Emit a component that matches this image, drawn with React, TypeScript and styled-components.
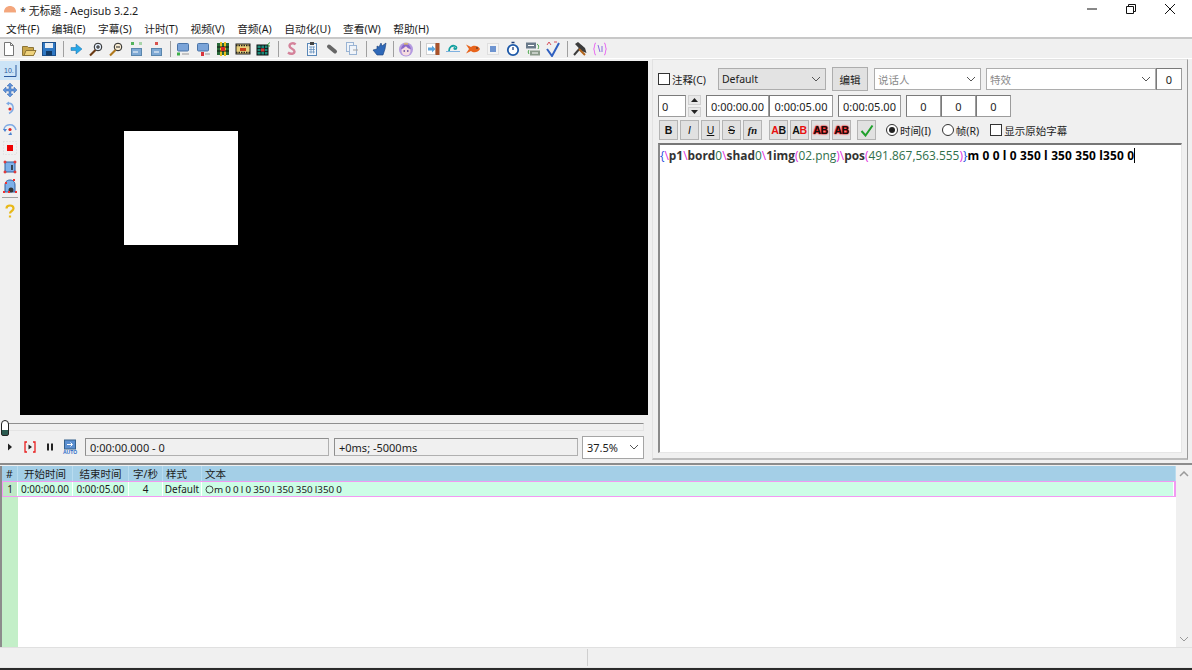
import React from 'react';
import styled, { createGlobalStyle } from 'styled-components';

const GlobalStyle = createGlobalStyle`
  html, body {
    margin: 0;
    padding: 0;
    background: #f0f0f0;
    overflow: hidden;
  }
  body {
    font-family: "Noto Sans", "Noto Sans CJK SC", sans-serif;
    font-size: 11px;
    color: #1c1c1c;
  }
  * { box-sizing: border-box; }
`;

const Window = styled.div`
  width: 1192px;
  height: 670px;
  display: flex;
  flex-direction: column;
  background: #f0f0f0;
  overflow: hidden;
`;

const TitleBar = styled.div`
  height: 19px;
  flex: none;
  background: #fff;
  display: flex;
  align-items: center;
  padding: 0 3px;
  font-size: 10.8px;
`;

const TitleText = styled.span`
  margin-left: 3px;
  flex: 1;
`;

const WindowButtons = styled.div`
  display: flex;
  align-items: center;
`;

const WindowButton = styled.div`
  width: 39px;
  height: 19px;
  display: flex;
  align-items: center;
  justify-content: center;
  margin-top: -2px;
`;

const MenuBar = styled.div`
  height: 18px;
  flex: none;
  background: #fff;
  display: flex;
  align-items: center;
  padding-left: 6px;
  gap: 12.5px;
  font-size: 10.7px;
`;

const Toolbar = styled.div`
  height: 22px;
  flex: none;
  display: flex;
  align-items: center;
  border-top: 2px solid #c8c8c8;
  border-bottom: 1px solid #fff;
`;

const ToolIcon = styled.div`
  width: 20px;
  height: 18px;
  flex: none;
  display: flex;
  align-items: center;
  padding-left: 1px;
`;

const ToolSep = styled.div<{ $wide?: boolean }>`
  width: 1px;
  height: 16px;
  margin: 0 ${(p) => (p.$wide ? 4 : 3)}px;
  flex: none;
  background: #a0a0a0;
`;

const Main = styled.div`
  height: 406px;
  flex: none;
  display: flex;
  border-bottom: 2px solid #8c8c8c;
`;

const VideoColumn = styled.div`
  width: 650px;
  flex: none;
  display: flex;
  flex-direction: column;
`;

const VideoRow = styled.div`
  display: flex;
  height: 354px;
  margin-top: 2px;
`;

const SideBar = styled.div`
  width: 20px;
  flex: none;
  display: flex;
  flex-direction: column;
  align-items: center;
`;

const SideButton = styled.div<{ $active?: boolean }>`
  width: 20px;
  height: 19.3px;
  flex: none;
  display: flex;
  align-items: center;
  justify-content: center;
  background: ${(p) => (p.$active ? '#cce4f7' : 'transparent')};
`;

const SideRule = styled.div`
  width: 16px;
  height: 1px;
  margin: 1px 0 3px;
  background: #a0a0a0;
`;

const VideoCanvas = styled.div`
  width: 628px;
  height: 354px;
  position: relative;
  background: #000;
`;

const WhiteSquare = styled.div`
  position: absolute;
  left: 104px;
  top: 70px;
  width: 114px;
  height: 114px;
  background: #fff;
`;

const SliderRow = styled.div`
  height: 20px;
  position: relative;
  margin: 0 5px;
  display: flex;
  align-items: center;
`;

const SliderTrack = styled.div`
  width: 639px;
  height: 8px;
  margin-top: 3px;
  border-top: 1px solid #8f8f8f;
  border-bottom: 1px solid #e4e4e4;
  border-right: 1px solid #e4e4e4;
`;

const SliderThumb = styled.div`
  position: absolute;
  left: -4px;
  top: 5px;
  width: 8px;
  height: 16px;
  background: linear-gradient(#fff 0 62%, #2a5a50 62%);
  border: 1px solid #222;
  border-radius: 4px 4px 2px 2px;
`;

const ControlsRow = styled.div`
  height: 24px;
  display: flex;
  align-items: center;
`;

const PlayButton = styled.div`
  width: 20px;
  height: 20px;
  flex: none;
  display: flex;
  align-items: center;
  justify-content: center;
`;

const ReadOnlyField = styled.div<{ $gap?: number }>`
  width: 244px;
  height: 18px;
  flex: none;
  margin-left: ${(p) => p.$gap ?? 0}px;
  display: flex;
  align-items: center;
  padding-left: 4px;
  background: #f0f0f0;
  border: 1px solid #8e8e8e;
  border-bottom-color: #b0b0b0;
  border-right-color: #b0b0b0;
  font-size: 11px;
  white-space: nowrap;
`;

const ZoomSelect = styled.div`
  width: 62px;
  height: 23px;
  flex: none;
  margin-left: 4px;
  display: flex;
  align-items: center;
  justify-content: space-between;
  padding: 0 4px;
  background: #fff;
  border: 1px solid #a5a5a5;
  font-size: 11px;
`;

const EditorFrame = styled.div`
  flex: 1;
  margin: 0 4px 3px 2px;
  padding: 8px 0 5px 5px;
  display: flex;
  flex-direction: column;
  border-top: 1px solid #e2e2e2;
  border-right: 1px solid #9a9a9a;
  border-bottom: 2px solid #bcbcbc;
  border-left: 1px solid #e2e2e2;
`;

const FormRow = styled.div<{ $height: number; $gap?: number }>`
  height: ${(p) => p.$height}px;
  flex: none;
  display: flex;
  align-items: center;
  margin-top: ${(p) => p.$gap ?? 0}px;
`;

const CheckBox = styled.div<{ $gap?: number }>`
  width: 12px;
  height: 12px;
  flex: none;
  margin-left: ${(p) => p.$gap ?? 0}px;
  background: #fff;
  border: 1px solid #333;
`;

const Radio = styled.div<{ $gap?: number; $on?: boolean }>`
  width: 12px;
  height: 12px;
  flex: none;
  margin-left: ${(p) => p.$gap ?? 0}px;
  display: flex;
  align-items: center;
  justify-content: center;
  border: 1px solid #333;
  border-radius: 50%;
  background: #fff;
  &::after {
    content: '';
    width: 6px;
    height: 6px;
    border-radius: 50%;
    background: ${(p) => (p.$on ? '#222' : 'transparent')};
  }
`;

const Label = styled.span`
  margin-left: 2px;
  font-size: 10.5px;
  white-space: nowrap;
`;

const Combo = styled.div<{ $width: number; $gap?: number; $grey?: boolean; $muted?: boolean }>`
  width: ${(p) => p.$width}px;
  height: 22px;
  flex: none;
  margin-left: ${(p) => p.$gap ?? 0}px;
  display: flex;
  align-items: center;
  justify-content: space-between;
  padding: 0 4px 0 3px;
  background: ${(p) => (p.$grey ? '#e3e3e3' : '#fff')};
  border: 1px solid #adadad;
  color: ${(p) => (p.$muted ? '#8a8a8a' : '#1c1c1c')};
  font-size: 10.5px;
`;

const PushButton = styled.div<{ $gap?: number }>`
  width: 36px;
  height: 24px;
  flex: none;
  margin-left: ${(p) => p.$gap ?? 0}px;
  display: flex;
  align-items: center;
  justify-content: center;
  background: #e1e1e1;
  border: 1px solid #adadad;
  font-size: 10.5px;
`;

const NumField = styled.div<{ $width: number; $gap?: number; $left?: boolean }>`
  width: ${(p) => p.$width}px;
  height: 22px;
  flex: none;
  margin-left: ${(p) => p.$gap ?? 0}px;
  display: flex;
  align-items: center;
  justify-content: ${(p) => (p.$left ? 'flex-start' : 'center')};
  padding-left: ${(p) => (p.$left ? 3 : 0)}px;
  background: #fff;
  border: 1px solid #7a7a7a;
  border-right-color: #9c9c9c;
  border-bottom-color: #9c9c9c;
  font-size: 11px;
`;

const Spinner = styled.div`
  width: 13px;
  height: 22px;
  margin-left: 2px;
  flex: none;
  display: flex;
  flex-direction: column;
  gap: 2px;
`;

const SpinPart = styled.div`
  flex: 1;
  display: flex;
  align-items: center;
  justify-content: center;
  background: #e8e8e8;
  border: 1px solid #d0d0d0;
`;

const FormatButton = styled.div<{ $gap?: number }>`
  width: 19px;
  height: 20px;
  flex: none;
  margin-left: ${(p) => p.$gap ?? 2}px;
  display: flex;
  align-items: center;
  justify-content: center;
  background: #e1e1e1;
  border: 1px solid #b4b4b4;
`;

const FormatGlyph = styled.span<{ $b?: boolean; $i?: boolean; $u?: boolean; $s?: boolean; $serif?: boolean }>`
  font-family: ${(p) => (p.$serif ? '"Liberation Serif", serif' : '"Liberation Sans", sans-serif')};
  font-size: 10.5px;
  font-weight: ${(p) => (p.$b ? 700 : 400)};
  font-style: ${(p) => (p.$i ? 'italic' : 'normal')};
  text-decoration: ${(p) => (p.$u ? 'underline' : p.$s ? 'line-through' : 'none')};
  color: #111;
`;

const ColorGlyph = styled.span<{ $glow?: boolean }>`
  font-family: "Liberation Sans", sans-serif;
  font-size: 10.5px;
  font-weight: 700;
  letter-spacing: -0.3px;
  color: #111;
  text-shadow: ${(p) => (p.$glow ? '0 0 1px #f00, 0 0 1px #f00, 0 0 2px #f00' : 'none')};
`;

const Red = styled.span`
  color: #e81010;
`;

const TextArea = styled.div`
  flex: 1;
  margin: 3px 5px 0 0;
  padding: 2px 0;
  background: #fff;
  border-top: 2px solid #777;
  border-left: 2px solid #8a8a8a;
  border-right: 1px solid #e6e6e6;
  border-bottom: 1px solid #e6e6e6;
  font-family: "Open Sans", "Noto Sans", sans-serif;
  font-size: 11.9px;
  line-height: 16px;
  white-space: nowrap;
`;

const Brace = styled.span`
  color: #2a50e0;
`;

const Slash = styled.span`
  color: #e030e0;
`;

const Tag = styled.b`
  color: #333;
  font-weight: 700;
`;

const Param = styled.span`
  color: #2f6f4a;
`;

const Plain = styled.b`
  color: #000;
  font-weight: 700;
  letter-spacing: 0.15px;
`;

const Caret = styled.span`
  display: inline-block;
  width: 1px;
  height: 15px;
  background: #000;
  vertical-align: -3px;
`;

const GridWrap = styled.div`
  height: 181px;
  flex: none;
  margin-top: 1px;
  display: flex;
  background: #fff;
`;

const GridBody = styled.div`
  width: 1176px;
  flex: none;
  display: flex;
  flex-direction: column;
  border-left: 2px solid #8c8c8c;
`;

const GridHead = styled.div`
  height: 15px;
  flex: none;
  display: flex;
  background: #a4cfe7;
`;

const GridRow = styled.div`
  height: 16px;
  flex: none;
  display: flex;
  background: #ccfde6;
  border: 1px solid #f29af2;
  border-right-width: 2px;
`;

const GridCell = styled.div<{ $width: number; $first?: boolean; $left?: boolean }>`
  width: ${(p) => p.$width}px;
  flex: ${(p) => (p.$width ? 'none' : 1)};
  display: flex;
  align-items: center;
  justify-content: ${(p) => (p.$left ? 'flex-start' : 'center')};
  padding-left: ${(p) => (p.$left ? 3 : 0)}px;
  border-right: 1px solid #fff;
  background: ${(p) => (p.$first ? '#bfe8c6' : 'transparent')};
  font-size: 10px;
  white-space: nowrap;
`;

const HeadCell = styled(GridCell)`
  font-size: 10.5px;
  border-right-color: #b9dcef;
`;

const EventText = styled.span`
  font-size: 9.8px;
  word-spacing: -0.4px;
`;

const GridRest = styled.div`
  flex: 1;
  display: flex;
`;

const RowGutter = styled.div`
  width: 16px;
  flex: none;
  background: #c3efc8;
`;

const ScrollTrack = styled.div`
  width: 16px;
  flex: none;
  display: flex;
  flex-direction: column;
  justify-content: space-between;
  align-items: center;
  padding: 5px 0;
  background: #f0f0f0;
`;

const StatusBar = styled.div`
  height: 21px;
  flex: none;
  display: flex;
  border-top: 1px solid #e0e0e0;
  border-bottom: 1px solid #e8e8e8;
`;

const StatusCell = styled.div`
  width: 588px;
  flex: none;
  margin: 1px 0;
  border-right: 1px solid #cfcfcf;
`;

const BottomEdge = styled.div`
  height: 2px;
  flex: none;
  background: #2b2b2b;
`;

const Chevron: React.FC<{ color?: string }> = ({ color = '#555' }) => (
  <svg width="10" height="6" viewBox="0 0 10 6" fill="none">
    <path d="M1 1l4 4 4-4" stroke={color} strokeWidth="1" />
  </svg>
);

// Toolbar art, kept as tiny 16x16 drawings
const icons: Record<string, React.ReactNode> = {
  newFile: (
    <path d="M3.5 1.5h6l3 3v10h-9zM9.5 1.5v3h3" fill="#fff" stroke="#777" />
  ),
  open: (
    <>
      <path d="M1.500 5.500h5l1 1h5v8h-11z" fill="#c9a64a" stroke="#8d7536" />
      <path d="M3 14.500l2-5h10l-2.500 5z" fill="#eed27d" stroke="#8d7536" />
    </>
  ),
  save: (
    <>
      <rect x="1.500" y="1.500" width="13" height="13" fill="#2f78c4" stroke="#1c4f8a" />
      <rect x="4" y="2" width="8" height="5" fill="#e8eef5" />
      <rect x="5" y="10" width="6" height="4.500" fill="#123a66" />
    </>
  ),
  jump: (
    <path d="M3 6.500h5V3l6 5-6 5V9.500H3z" fill="#28a8e8" stroke="#1a6fa8" strokeWidth=".5" />
  ),
  zoomIn: (
    <>
      <circle cx="10" cy="6" r="3.800" fill="#dfe9f5" stroke="#222" />
      <path d="M2 14.500l5.500-5.500" stroke="#6a3a14" strokeWidth="2.200" />
      <path d="M8 6h4M10 4v4" stroke="#222" />
    </>
  ),
  zoomOut: (
    <>
      <circle cx="10" cy="6" r="3.800" fill="#f6ead0" stroke="#222" />
      <path d="M2 14.500l5.500-5.500" stroke="#b0781c" strokeWidth="2.200" />
      <path d="M8 6h4" stroke="#222" />
    </>
  ),
  jumpStart: (
    <>
      <rect x="3.500" y="7.500" width="10" height="7" fill="#7fa9d4" stroke="#5a86ac" />
      <rect x="3" y="1" width="3" height="3" fill="#54b45c" />
      <rect x="11" y="1" width="3" height="3" fill="#a8d4aa" />
      <path d="M5 11h5" stroke="#fff" />
    </>
  ),
  jumpEnd: (
    <>
      <rect x="3.500" y="7.500" width="10" height="7" fill="#7fa9d4" stroke="#5a86ac" />
      <rect x="7" y="1" width="3" height="3" fill="#d8524c" />
      <path d="M6 11h5" stroke="#fff" />
    </>
  ),
  snapStart: (
    <>
      <rect x="2.500" y="2.500" width="11" height="7.500" rx="1" fill="#7ba4d8" stroke="#4a74a8" />
      <rect x="2" y="11.500" width="3" height="3" fill="#3fb04a" />
      <path d="M7 13h7" stroke="#c4c4c4" strokeWidth="2" />
    </>
  ),
  snapEnd: (
    <>
      <rect x="2.500" y="2.500" width="11" height="7.500" rx="1" fill="#7ba4d8" stroke="#4a74a8" />
      <rect x="6" y="11" width="3" height="4" fill="#d8343c" />
      <path d="M10 13h5" stroke="#c4c4c4" strokeWidth="2" />
    </>
  ),
  keyColor: (
    <>
      <rect x="2" y="2" width="12" height="12" fill="#2a6a3a" />
      <path d="M6 1v14M10 1v14" stroke="#e8c020" strokeWidth="2" />
      <path d="M2 6h12M2 10h12" stroke="#111" />
      <path d="M6 6h4v4H6z" fill="#d82a2a" />
    </>
  ),
  film: (
    <>
      <rect x="1" y="3" width="14" height="10" fill="#e8cf7a" stroke="#222" />
      <path d="M1 4.500h14M1 11.500h14" stroke="#222" strokeDasharray="1.500 1" strokeWidth="1.500" />
      <path d="M5 7h6v3H5z" fill="#c8401c" />
    </>
  ),
  grid: (
    <>
      <rect x="2" y="4" width="11" height="10" fill="#1a8a7a" stroke="#111" />
      <path d="M2 7.500h11M2 10.500h11M6 4v10M9.500 4v10" stroke="#111" strokeWidth=".8" />
      <path d="M6 7.500h3.500v3H6z" fill="#d83030" />
      <path d="M12 4l3-2.500M13 5h2" stroke="#3ca84a" />
    </>
  ),
  styleS: (
    <path d="M11.500 3.500C10 1.500 5.500 2 5.500 5c0 3 5 2.500 5 5.500 0 2.500-4 3-6.500 1" fill="none" stroke="#d4829a" strokeWidth="2.400" />
  ),
  manager: (
    <>
      <rect x="3.500" y="2.500" width="9" height="12" fill="#f4f7fb" stroke="#5a88b8" />
      <rect x="6" y="1" width="4" height="3" fill="#444" />
      <path d="M5 6h6M5 8.500h6M5 11h6M7 5.500v7M9.500 5.500v7" stroke="#5a88b8" strokeWidth=".7" />
    </>
  ),
  pill: (
    <path d="M5 5.500l6 5" stroke="#666" strokeWidth="4" strokeLinecap="round" />
  ),
  copies: (
    <>
      <rect x="2.500" y="1.500" width="7" height="9" fill="#f0f4f9" stroke="#9ab4d4" />
      <rect x="5.500" y="4.500" width="7" height="9" fill="#f0f4f9" stroke="#9ab4d4" />
      <path d="M9 9h5" stroke="#a0a0a0" />
    </>
  ),
  paint: (
    <path d="M2 9l4 5h6l2-6 1-6-4 3-1-3-2 4-2-1v3z" fill="#2e68b8" stroke="#183e78" strokeWidth=".6" />
  ),
  avatar: (
    <>
      <circle cx="8" cy="8.500" r="7" fill="#b49ae0" />
      <circle cx="8" cy="10" r="4.500" fill="#f6dce0" />
      <path d="M3 8c2 0 3-1 5-3 1 2 3 3 5 3-1-4-3-5-5-5S4 4 3 8z" fill="#8a68c8" />
      <path d="M6 1.500l1 1.500 1-1.500 1 1.500 1-1.500v2H6z" fill="#e8c84c" />
      <path d="M5.500 10h1.500M9 10h1.500" stroke="#5a3e9c" strokeWidth="1.400" />
    </>
  ),
  toFrame: (
    <>
      <rect x="1.500" y="2.500" width="9" height="11" fill="#fff" stroke="#aaa" strokeDasharray="1 1" />
      <rect x="10.500" y="2" width="4" height="12" fill="#a8522a" />
      <path d="M3 6.500h4V4.500l3.500 3.500L7 11.500V9.500H3z" fill="#5aa4dc" />
    </>
  ),
  wave: (
    <>
      <path d="M1 10.500h14" stroke="#7eb0e0" />
      <path d="M4 10c0-4 3-6 6-5 2 .5 2 3 0 3-1 0-1-1 0-1" fill="none" stroke="#14a0a0" strokeWidth="1.800" />
    </>
  ),
  fish: (
    <>
      <path d="M1 3.500l3 4.500-3 4.500 5-2.500c2 2 7 2 9-2-2-4-7-4-9-2z" fill="#e8641c" />
      <circle cx="12" cy="7" r=".8" fill="#222" />
    </>
  ),
  square: (
    <>
      <rect x="2.500" y="2.500" width="11" height="11" fill="#f4f4f4" stroke="#ccc" strokeDasharray="1 1" />
      <rect x="5" y="5" width="6" height="6" fill="#6e94d0" />
    </>
  ),
  clock: (
    <>
      <circle cx="8" cy="9" r="5.200" fill="#fff" stroke="#1c58a8" strokeWidth="1.800" />
      <path d="M6.500 1.500h3M8 9V6" stroke="#1c3c78" strokeWidth="1.300" />
    </>
  ),
  translate: (
    <>
      <rect x="1" y="1.500" width="10" height="6" fill="#6a7a8a" />
      <rect x="5" y="9.500" width="10" height="5" fill="#8a9a8a" />
      <path d="M12 3c2 1 2 3 1 5M4 9c-1 1-1 3 0 4" fill="none" stroke="#4aa84a" />
      <path d="M3 4.500h6M7 12h6" stroke="#fff" />
    </>
  ),
  spell: (
    <>
      <path d="M2 8l5 7 7-13" fill="none" stroke="#3060c0" strokeWidth="2" />
      <path d="M2 4l2-3 2 3M9 1h3" fill="none" stroke="#d8505c" />
    </>
  ),
  tools: (
    <>
      <path d="M2 14L10 5" stroke="#3c3c3c" strokeWidth="2" />
      <path d="M3 3l3-2 7 6 1.500 5-5-2z" fill="#3c3c3c" />
      <path d="M13 14L7 8" stroke="#b0641c" strokeWidth="2" />
    </>
  ),
  tag: (
    <>
      <path d="M4 2C2 2 3 7 1.500 8 3 9 2 14 4 14M12 2c2 0 1 5 2.500 6C13 9 14 14 12 14" fill="none" stroke="#e850f0" />
      <path d="M6 4l2 7M10 5v6" stroke="#8a68e0" />
    </>
  ),
  ruler: (
    <>
      <path d="M2 13.500h12M14 2v11.500" stroke="#2a5aa0" />
      <text x="2" y="10" fontSize="7" fill="#2a5aa0" fontFamily="Liberation Sans">10.</text>
    </>
  ),
  move: (
    <path d="M8 1l3 3H9v3h3V5l3 3-3 3V9H9v3h2l-3 3-3-3h2V9H4v2L1 8l3-3v2h3V4H5z" fill="#5c90d8" stroke="#3a6ab0" strokeWidth=".5" />
  ),
  rotateZ: (
    <>
      <path d="M6 2.500c5-1 8 6 1 10" fill="none" stroke="#7eaae4" strokeWidth="1.500" />
      <path d="M7 .5L4 2.500l3 2z" fill="#7eaae4" />
      <circle cx="8" cy="8" r="1.600" fill="#e02020" />
    </>
  ),
  rotateXY: (
    <>
      <path d="M2 9c0-6 10-8 12 0" fill="none" stroke="#7eaae4" strokeWidth="1.500" />
      <path d="M1 8l2 3 2-3zM6 14l3-3 1 3z" fill="#4c84d0" />
      <circle cx="8" cy="8.500" r="1.600" fill="#e02020" />
    </>
  ),
  dot: (
    <>
      <rect x="1.500" y="1.500" width="13" height="13" fill="none" stroke="#d8d8d8" strokeDasharray="1 2" />
      <rect x="5" y="5" width="6" height="6" fill="#f00000" />
    </>
  ),
  scale: (
    <>
      <rect x="3" y="3" width="10" height="10" fill="#7eb0e8" stroke="#3060a0" />
      <path d="M2 2h2v2H2zM12 2h2v2h-2zM2 12h2v2H2zM12 12h2v2h-2z" fill="#f05050" stroke="#d02020" strokeWidth=".5" />
      <path d="M10 6v5" stroke="#222" strokeWidth="1.500" />
    </>
  ),
  clip: (
    <>
      <path d="M3 14V7c0-4 3-5 5-5s5 1 5 5v7z" fill="#7eb0e8" stroke="#3060a0" />
      <circle cx="9" cy="12" r="2.500" fill="#333" />
      <path d="M1 14h2M13 14h2M3 5h2M11 2h2M6 14h2" stroke="#f03030" strokeWidth="1.800" />
    </>
  ),
  help: (
    <path d="M4.500 5.500C4.500 1.500 11.500 1.500 11.500 5.500c0 2.500-3.500 2.500-3.500 5M8 12.500v2" fill="none" stroke="#e8b818" strokeWidth="2.200" />
  ),
  play: <path d="M6 4.500l4 3.500-4 3.500z" fill="#222" />,
  playLine: (
    <>
      <path d="M5 3H3v10h2M11 3h2v10h-2" fill="none" stroke="#e82020" strokeWidth="1.300" />
      <path d="M6.500 5.500L10 8l-3.500 2.500z" fill="#222" />
    </>
  ),
  pause: <path d="M5 4.500h2v7H5zM9 4.500h2v7H9z" fill="#222" />,
  auto: (
    <>
      <rect x="2.500" y="1" width="11" height="9" fill="#5b8fd0" stroke="#34608c" />
      <path d="M5 5.500h5M8.500 3.500l2 2-2 2" stroke="#fff" fill="none" />
      <text x="1" y="15" fontSize="5" fontWeight="700" fill="#2a6ac8" fontFamily="Liberation Sans">AUTO</text>
    </>
  ),
};

const Art: React.FC<{ name: string }> = ({ name }) => (
  <svg width="16" height="16" viewBox="0 0 16 16">{icons[name]}</svg>
);

const toolGroups = [
  ['newFile', 'open', 'save'],
  ['jump', 'zoomIn', 'zoomOut', 'jumpStart', 'jumpEnd'],
  ['snapStart', 'snapEnd', 'keyColor', 'film', 'grid'],
  ['styleS', 'manager', 'pill', 'copies'],
  ['paint'],
  ['avatar'],
  ['toFrame', 'wave', 'fish', 'square', 'clock', 'translate', 'spell'],
  ['tools', 'tag'],
];

const menus = ['文件(F)', '编辑(E)', '字幕(S)', '计时(T)', '视频(V)', '音频(A)', '自动化(U)', '查看(W)', '帮助(H)'];

const sideTools = ['ruler', 'move', 'rotateZ', 'rotateXY', 'dot', 'scale', 'clip'];

const App: React.FC = () => (
  <Window>
    <GlobalStyle />
    <TitleBar>
      <svg width="14" height="12" viewBox="0 0 14 12">
        <path d="M1 8c0-4 3-6 6-6s6 2 6 6z" fill="#f4a67c" />
        <path d="M1 8h12v1H1z" fill="#f8d8c4" />
      </svg>
      <TitleText>* 无标题 - Aegisub 3.2.2</TitleText>
      <WindowButtons>
        <WindowButton>
          <svg width="10" height="10" viewBox="0 0 10 10"><path d="M0 5h10" stroke="#111" /></svg>
        </WindowButton>
        <WindowButton>
          <svg width="10" height="10" viewBox="0 0 10 10" fill="none" stroke="#111">
            <path d="M.5 2.500h7v7h-7zM2.500 2.500v-2h7v7h-2" />
          </svg>
        </WindowButton>
        <WindowButton>
          <svg width="10" height="10" viewBox="0 0 10 10" stroke="#111"><path d="M0 0l10 10M10 0L0 10" /></svg>
        </WindowButton>
      </WindowButtons>
    </TitleBar>
    <MenuBar>
      {menus.map((m) => (
        <span key={m}>{m}</span>
      ))}
    </MenuBar>
    <Toolbar>
      {toolGroups.map((group, i) => (
        <React.Fragment key={i}>
          {i > 0 && <ToolSep $wide={i === 3} />}
          {group.map((name) => (
            <ToolIcon key={name}>
              <Art name={name} />
            </ToolIcon>
          ))}
        </React.Fragment>
      ))}
    </Toolbar>
    <Main>
      <VideoColumn>
        <VideoRow>
          <SideBar>
            {sideTools.map((name, i) => (
              <SideButton key={name} $active={i === 0}>
                <Art name={name} />
              </SideButton>
            ))}
            <SideRule />
            <SideButton>
              <Art name="help" />
            </SideButton>
          </SideBar>
          <VideoCanvas>
            <WhiteSquare />
          </VideoCanvas>
        </VideoRow>
        <SliderRow>
          <SliderTrack />
          <SliderThumb />
        </SliderRow>
        <ControlsRow>
          <PlayButton><Art name="play" /></PlayButton>
          <PlayButton><Art name="playLine" /></PlayButton>
          <PlayButton><Art name="pause" /></PlayButton>
          <PlayButton><Art name="auto" /></PlayButton>
          <ReadOnlyField $gap={5}>0:00:00.000 - 0</ReadOnlyField>
          <ReadOnlyField $gap={5}>+0ms; -5000ms</ReadOnlyField>
          <ZoomSelect>
            37.5%
            <Chevron />
          </ZoomSelect>
        </ControlsRow>
      </VideoColumn>
      <EditorFrame>
        <FormRow $height={22}>
          <CheckBox />
          <Label>注释(C)</Label>
          <Combo $width={108} $gap={12} $grey>
            Default
            <Chevron />
          </Combo>
          <PushButton $gap={6}>编辑</PushButton>
          <Combo $width={107} $gap={6} $muted>
            说话人
            <Chevron />
          </Combo>
          <Combo $width={170} $gap={5} $muted>
            特效
            <Chevron />
          </Combo>
          <NumField $width={26}>0</NumField>
        </FormRow>
        <FormRow $height={22} $gap={5}>
          <NumField $width={28} $left>0</NumField>
          <Spinner>
            <SpinPart>
              <svg width="7" height="4" viewBox="0 0 7 4"><path d="M3.500 0L7 4H0z" fill="#222" /></svg>
            </SpinPart>
            <SpinPart>
              <svg width="7" height="4" viewBox="0 0 7 4"><path d="M0 0h7L3.500 4z" fill="#222" /></svg>
            </SpinPart>
          </Spinner>
          <NumField $width={63} $gap={5}>0:00:00.00</NumField>
          <NumField $width={64}>0:00:05.00</NumField>
          <NumField $width={63} $gap={5}>0:00:05.00</NumField>
          <NumField $width={35} $gap={5}>0</NumField>
          <NumField $width={35}>0</NumField>
          <NumField $width={35}>0</NumField>
        </FormRow>
        <FormRow $height={20} $gap={3}>
          <FormatButton $gap={1}><FormatGlyph $b>B</FormatGlyph></FormatButton>
          <FormatButton><FormatGlyph $i>I</FormatGlyph></FormatButton>
          <FormatButton><FormatGlyph $u>U</FormatGlyph></FormatButton>
          <FormatButton><FormatGlyph $s>S</FormatGlyph></FormatButton>
          <FormatButton><FormatGlyph $b $i $serif>fn</FormatGlyph></FormatButton>
          <FormatButton $gap={7}><ColorGlyph><Red>A</Red>B</ColorGlyph></FormatButton>
          <FormatButton><ColorGlyph>A<Red>B</Red></ColorGlyph></FormatButton>
          <FormatButton><ColorGlyph $glow>AB</ColorGlyph></FormatButton>
          <FormatButton><ColorGlyph $glow>AB</ColorGlyph></FormatButton>
          <FormatButton $gap={6}>
            <svg width="14" height="13" viewBox="0 0 14 13" fill="none">
              <path d="M1.500 7l4 4.500 7-10" stroke="#1fa02c" strokeWidth="2" />
            </svg>
          </FormatButton>
          <Radio $gap={10} $on />
          <Label>时间(I)</Label>
          <Radio $gap={11} />
          <Label>帧(R)</Label>
          <CheckBox $gap={11} />
          <Label>显示原始字幕</Label>
        </FormRow>
        <TextArea>
          <Brace>{'{'}</Brace>
          <Slash>\</Slash><Tag>p1</Tag>
          <Slash>\</Slash><Tag>bord</Tag><Param>0</Param>
          <Slash>\</Slash><Tag>shad</Tag><Param>0</Param>
          <Slash>\</Slash><Tag>1img</Tag><Slash>(</Slash><Param>02.png</Param><Slash>)</Slash>
          <Slash>\</Slash><Tag>pos</Tag><Slash>(</Slash><Param>491.867,563.555</Param><Slash>)</Slash>
          <Brace>{'}'}</Brace>
          <Plain>m 0 0 l 0 350 l 350 350 l350 0</Plain>
          <Caret />
        </TextArea>
      </EditorFrame>
    </Main>
    <GridWrap>
      <GridBody>
        <GridHead>
          <HeadCell $width={16}>#</HeadCell>
          <HeadCell $width={55}>开始时间</HeadCell>
          <HeadCell $width={56}>结束时间</HeadCell>
          <HeadCell $width={34}>字/秒</HeadCell>
          <HeadCell $width={39} $left>样式</HeadCell>
          <HeadCell $width={0} $left>文本</HeadCell>
        </GridHead>
        <GridRow>
          <GridCell $width={15} $first>1</GridCell>
          <GridCell $width={55}>0:00:00.00</GridCell>
          <GridCell $width={56}>0:00:05.00</GridCell>
          <GridCell $width={34}>4</GridCell>
          <GridCell $width={39}>Default</GridCell>
          <GridCell $width={0} $left>
            <svg width="9" height="9" viewBox="0 0 9 9" fill="none">
              <circle cx="4.500" cy="4.500" r="3.500" stroke="#444" />
            </svg>
            <EventText>m 0 0 l 0 350 l 350 350 l350 0</EventText>
          </GridCell>
        </GridRow>
        <GridRest>
          <RowGutter />
        </GridRest>
      </GridBody>
      <ScrollTrack>
        <svg width="10" height="6" viewBox="0 0 10 6" fill="none">
          <path d="M1 5l4-4 4 4" stroke="#9a9a9a" strokeWidth="1.500" />
        </svg>
        <Chevron color="#9a9a9a" />
      </ScrollTrack>
    </GridWrap>
    <StatusBar>
      <StatusCell />
    </StatusBar>
    <BottomEdge />
  </Window>
);

export default App;
